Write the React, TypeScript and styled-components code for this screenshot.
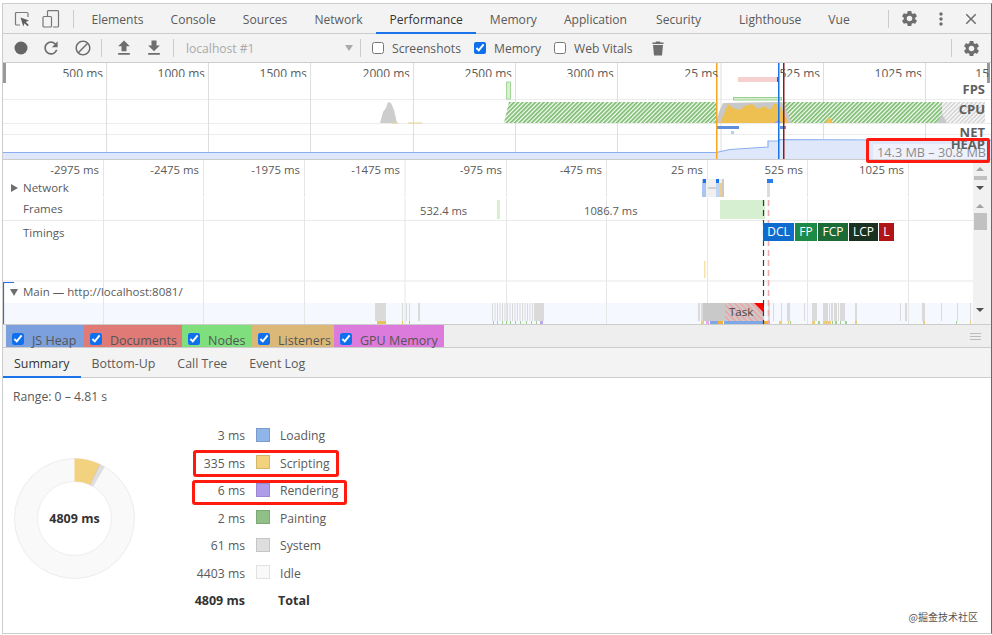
import React from 'react'
import styled, { createGlobalStyle } from 'styled-components'
import { MdSettings, MdRefresh, MdBlock, MdFileUpload, MdFileDownload, MdClose, MdMoreVert } from 'react-icons/md'

const Global = createGlobalStyle`
  html, body { margin: 0; padding: 0; background: #fff; overflow: hidden; }
  body { font-family: "Open Sans", "Noto Sans", "Liberation Sans", sans-serif; font-size: 12px; color: #5a5a5a; }
  * { box-sizing: border-box; }
`

const Frame = styled.div`
  width: 990px;
  height: 631px;
  margin: 3px 0 0 2px;
  border-top: 1px solid #ccc;
  border-left: 1px solid #ccc;
  border-right: 1px solid #667;
  border-bottom: 1px solid #ccc;
  display: flex;
  flex-direction: column;
  position: relative;
`

const Bar = styled.div<{ $h: number; $l?: number; $r?: number }>`
  height: ${p => p.$h}px;
  flex: none;
  display: flex;
  align-items: center;
  padding: 0 ${p => p.$r ?? 0}px 0 ${p => p.$l ?? 0}px;
  background: #f3f3f3;
  border-bottom: 1px solid #ccc;
  color: #5a5a5a;
`

const IconBtn = styled.span<{ $w?: number; $ml?: number }>`
  width: ${p => p.$w ?? 30}px;
  margin-left: ${p => p.$ml ?? 0}px;
  flex: none;
  display: flex;
  align-items: center;
  justify-content: center;
  color: #6e6e6e;
`

const Sep = styled.span<{ $l: number; $r: number }>`
  width: 1px;
  height: 18px;
  flex: none;
  background: #ccc;
  margin: 0 ${p => p.$r}px 0 ${p => p.$l}px;
`

const PanelTab = styled.span<{ $on?: boolean; $gap?: number }>`
  align-self: flex-start;
  height: 30px;
  padding: 0 13.5px;
  margin-left: ${p => p.$gap ?? 0}px;
  display: flex;
  align-items: center;
  font-size: 12.1px;
  color: ${p => (p.$on ? '#333' : '#5a5a5a')};
  border-bottom: 2px solid ${p => (p.$on ? '#1a73e8' : 'transparent')};
  border-top: 3px solid transparent;
`

const Spacer = styled.span`
  flex: 1;
`

const Select = styled.span`
  width: 167px;
  margin-left: 12px;
  display: flex;
  align-items: center;
  justify-content: space-between;
  color: #aaa;
  font-size: 12.1px;
`

const Caret = styled.span<{ $dir: 'up' | 'down' | 'right'; $color?: string; $size?: number; $len?: number }>`
  display: block;
  width: 0;
  height: 0;
  flex: none;
  border-style: solid;
  border-color: transparent;
  ${p => {
    const s = p.$size ?? 4.5
    const l = p.$len ?? s
    const c = p.$color ?? '#999'
    if (p.$dir === 'up') return `border-width: 0 ${s}px ${l}px; border-bottom-color: ${c};`
    if (p.$dir === 'down') return `border-width: ${l}px ${s}px 0; border-top-color: ${c};`
    return `border-width: ${s}px 0 ${s}px ${l}px; border-left-color: ${c};`
  }}
`

const CheckLabel = styled.label<{ $w: number }>`
  width: ${p => p.$w}px;
  flex: none;
  display: flex;
  align-items: center;
  gap: 8px;
  font-size: 12.1px;
  color: #5a5a5a;
`

const Check = styled.input.attrs({ type: 'checkbox' })`
  width: 12px;
  height: 12px;
  margin: 0;
  flex: none;
  accent-color: #0f6fec;
`

/* overview strip */
const Overview = styled.div`
  height: 97px;
  flex: none;
  position: relative;
  overflow: hidden;
  border-bottom: 1px solid #ccc;
  background: #fff;
`

const Drawing = styled.svg`
  position: absolute;
  left: 0;
  top: 0;
  display: block;
`

const OverviewTime = styled.span<{ $end: number }>`
  position: absolute;
  top: 3px;
  left: ${p => p.$end - 3}px;
  height: 11px;
  overflow: hidden;
  transform: translateX(-100%);
  line-height: 16px;
  font-size: 12px;
  white-space: nowrap;
`

const TrackName = styled.span<{ $top: number }>`
  position: absolute;
  right: 6px;
  top: ${p => p.$top}px;
  line-height: 16px;
  font-size: 13px;
  font-weight: 700;
  color: #5f5f5f;
`

const HeapRange = styled.span`
  position: absolute;
  right: 5px;
  top: 81px;
  padding: 0 0 0 4px;
  line-height: 16px;
  font-size: 12.7px;
  color: #8c8c8c;
  background: rgba(244, 246, 252, 0.75);
  white-space: nowrap;
`

const RedBox = styled.span`
  position: absolute;
  left: 866px;
  top: 138px;
  width: 124px;
  height: 25px;
  border: 3px solid #ff1a10;
  border-radius: 2px;
  z-index: 3;
`

/* flame chart */
const Flame = styled.div`
  height: 164px;
  flex: none;
  display: flex;
`

const FlameArea = styled.div`
  flex: 1;
  position: relative;
  overflow: hidden;
  background: #fff;
`

const FlameRow = styled.div<{ $h: number; $pad?: number }>`
  height: ${p => p.$h}px;
  padding-top: ${p => p.$pad ?? 0}px;
  padding-left: 20px;
  position: relative;
  display: flex;
  align-items: flex-start;
  font-size: 11.5px;
  line-height: 16px;
`

const RowCaret = styled.span<{ $x: number; $y: number }>`
  position: absolute;
  left: ${p => p.$x}px;
  top: ${p => p.$y}px;
  display: flex;
`

const FlameTime = styled.span<{ $end: number }>`
  position: absolute;
  top: 2px;
  left: ${p => p.$end - 3}px;
  transform: translateX(-100%);
  line-height: 16px;
  font-size: 11.4px;
  white-space: nowrap;
`

const FrameTime = styled.span<{ $x: number }>`
  position: absolute;
  top: 5px;
  left: ${p => p.$x - 3}px;
  line-height: 16px;
  font-size: 11.2px;
  white-space: nowrap;
`

const Marks = styled.div`
  position: absolute;
  left: 760px;
  top: 2px;
  display: flex;
  gap: 1px;
`

const Mark = styled.span<{ $w: number; $bg: string }>`
  width: ${p => p.$w}px;
  height: 18px;
  background: ${p => p.$bg};
  color: #fff;
  font-size: 12px;
  line-height: 18px;
  text-align: center;
`

const TaskLabel = styled.span`
  position: absolute;
  left: 726px;
  top: 1px;
  font-size: 11.5px;
  line-height: 16px;
  color: #444;
`

const Scroll = styled.div`
  width: 18px;
  flex: none;
  background: #f1f1f1;
  display: flex;
  flex-direction: column;
  align-items: center;
  padding: 7px 4px 0 0;
`

const ScrollThumb = styled.span<{ $h: number; $top: number; $bottom: number }>`
  width: 13px;
  height: ${p => p.$h}px;
  margin: ${p => p.$top}px 0 ${p => p.$bottom}px;
  background: #c1c1c1;
`

const ScrollGap = styled.span`
  height: 14px;
  flex: none;
`

/* memory counters */
const MemoryBar = styled.div`
  height: 24px;
  flex: none;
  display: flex;
  padding-left: 3px;
  background: #eee;
  border-top: 1px solid #ccc;
  border-bottom: 1px solid #ccc;
  align-items: stretch;
`

const MemoryTab = styled.label<{ $bg: string; $w: number }>`
  width: ${p => p.$w}px;
  display: flex;
  align-items: flex-end;
  gap: 8px;
  padding-left: 6px;
  background: ${p => p.$bg};
  font-size: 12.5px;
  line-height: 13px;
  color: #555;
  white-space: nowrap;
  ${Check} { margin-bottom: 2px; }
`

const Hamburger = styled.span`
  width: 11px;
  height: 7px;
  margin: auto 10px auto auto;
  border-top: 1px solid #bbb;
  border-bottom: 1px solid #bbb;
  position: relative;
  &::after {
    content: '';
    position: absolute;
    left: 0;
    right: 0;
    top: 2px;
    height: 1px;
    background: #bbb;
  }
`

const SummaryTab = styled.span<{ $on?: boolean }>`
  align-self: flex-start;
  height: 30px;
  padding: 0 11px;
  display: flex;
  align-items: center;
  font-size: 12.4px;
  color: ${p => (p.$on ? '#333' : '#5a5a5a')};
  border-bottom: 2px solid ${p => (p.$on ? '#1a73e8' : 'transparent')};
  border-top: 3px solid transparent;
`

/* summary panel */
const Panel = styled.div`
  flex: 1;
  padding: 11px 0 0 10px;
  background: #fff;
`

const RangeLine = styled.div`
  font-size: 12.2px;
  line-height: 16px;
`

const Split = styled.div`
  display: flex;
  align-items: flex-start;
`

const Pie = styled.div`
  width: 121px;
  height: 121px;
  margin: 53px 0 0 1px;
  flex: none;
  position: relative;
  display: flex;
  align-items: center;
  justify-content: center;
  font-weight: 700;
  font-size: 12.5px;
  color: #333;
  svg { position: absolute; inset: 0; }
  span { position: relative; }
`

const Legend = styled.div`
  margin: 17px 0 0 29px;
`

const LegendRow = styled.div<{ $bold?: boolean }>`
  height: 27.5px;
  display: flex;
  align-items: center;
  font-size: ${p => (p.$bold ? 12.5 : 12.2)}px;
  font-weight: ${p => (p.$bold ? 700 : 400)};
  color: ${p => (p.$bold ? '#333' : '#5a5a5a')};
`

const Value = styled.span`
  width: 81px;
  text-align: right;
  white-space: nowrap;
`

const Swatch = styled.span<{ $bg: string; $bd: string }>`
  width: 14px;
  height: 14px;
  margin: -2px 10px 0 11px;
  flex: none;
  background: ${p => p.$bg};
  border: 1px solid ${p => p.$bd};
`

const TotalLabel = styled.span`
  margin-left: 33px;
`

const Highlight = styled.span<{ $x: number; $y: number; $w: number; $h: number }>`
  position: absolute;
  left: ${p => p.$x}px;
  top: ${p => p.$y}px;
  width: ${p => p.$w}px;
  height: ${p => p.$h}px;
  border: 3px solid #ff1a10;
  border-radius: 3px;
`

const Watermark = styled.span`
  position: absolute;
  right: 13px;
  bottom: 9px;
  font-family: "Noto Sans CJK SC", sans-serif;
  font-size: 10px;
  line-height: 14px;
  color: #555;
`

const overviewGrid = [106.5, 208.5, 310.5, 413.5, 515.5, 617.5, 721, 823.5, 925.5]
const overviewTimes: [string, number][] = [
  ['500 ms', 103], ['1000 ms', 205], ['1500 ms', 307], ['2000 ms', 410], ['2500 ms', 512],
  ['3000 ms', 614], ['25 ms', 718], ['525 ms', 820], ['1025 ms', 922], ['15', 989],
]
const flameGrid = [103.5, 203.5, 304.5, 405, 506.5, 606.5, 707.5, 807.5, 908.5]
const flameTimes: [string, number][] = [
  ['-2975 ms', 99], ['-2475 ms', 199], ['-1975 ms', 300], ['-1475 ms', 400], ['-975 ms', 502],
  ['-475 ms', 602], ['25 ms', 703], ['525 ms', 803], ['1025 ms', 904], ['15', 990],
]
const denseStripes: [number, number][] = Array.from({ length: 17 }, (_, i) => [492 + i * 2.5, 1])
const stripes: [number, number][] = [
  [375, 11], [402, 1], [406, 1], [409, 1], [418, 2], ...denseStripes, [534, 10], [698, 2], [701, 2],
  [768, 2], [773, 1], [781, 1], [787, 3], [804, 1], [812, 5], [823, 5], [829, 1], [831, 2], [834, 3],
  [838, 1], [840, 5], [855, 2], [900, 1], [905, 2], [922, 3], [941, 1], [957, 1], [970, 1],
]
const ticks: [number, number, string][] = [
  [377, 9, '#eac05a'], [402, 1, '#eac05a'], [409, 1, '#9fd08f'], [493, 1, '#9fd08f'], [497, 1, '#eac05a'],
  [502, 1, '#9fd08f'], [506, 1, '#9fd08f'], [510, 1, '#9fd08f'], [515, 1, '#9fd08f'],
  [520, 1, '#9fd08f'], [526, 1, '#9fd08f'], [531, 1, '#9fd08f'], [536, 1, '#9fd08f'], [540, 3, '#b9a6ea'],
  [701, 3, '#f0cc78'], [706, 3, '#e9a8ea'], [710, 8, '#7da7e8'], [718, 5, '#f0b040'], [724, 39, '#7da7e8'],
  [763, 7, '#f0b040'], [779, 3, '#f0cc78'], [788, 1, '#f0cc78'], [790, 1, '#9fd08f'], [812, 3, '#f0cc78'],
  [818, 2, '#9fd08f'], [823, 8, '#f0cc78'], [832, 1, '#9fd08f'], [835, 2, '#9fd08f'], [840, 1, '#9fd08f'],
  [845, 2, '#9fd08f'], [855, 2, '#f0cc78'], [923, 2, '#f0cc78'], [956, 1, '#9fd08f'], [970, 1, '#f0cc78'],
]

const arc = (a0: number, a1: number, R: number, r: number, c = 60.5) => {
  const pt = (a: number, d: number) => {
    const t = ((a - 90) * Math.PI) / 180
    return `${(c + d * Math.cos(t)).toFixed(2)} ${(c + d * Math.sin(t)).toFixed(2)}`
  }
  const big = a1 - a0 > 180 ? 1 : 0
  return `M${pt(a0, R)}A${R} ${R} 0 ${big} 1 ${pt(a1, R)}L${pt(a1, r)}A${r} ${r} 0 ${big} 0 ${pt(a0, r)}Z`
}

const legend = [
  { v: '3 ms', n: 'Loading', bg: '#8fb5e9', bd: '#7a9ccb' },
  { v: '335 ms', n: 'Scripting', bg: '#f3d27f', bd: '#d6b76a' },
  { v: '6 ms', n: 'Rendering', bg: '#ae9bea', bd: '#9a89cf' },
  { v: '2 ms', n: 'Painting', bg: '#90c088', bd: '#7ca876' },
  { v: '61 ms', n: 'System', bg: '#dedede', bd: '#c6c6c6' },
  { v: '4403 ms', n: 'Idle', bg: '#f9f9f9', bd: '#e2e2e2' },
]

const InspectIcon = () => (
  <svg width="16" height="16" viewBox="0 0 16 16">
    <path d="M6 14H2.5A1 1 0 0 1 1.5 13V2.5A1 1 0 0 1 2.5 1.5H13A1 1 0 0 1 14 2.5V6" fill="none" stroke="#7a7a7a" strokeWidth="1.2" />
    <path d="M6.5 6.5L15 9.5L11.8 11L14.8 14L13.5 15.3L10.5 12.3L9.3 15.5Z" fill="#5f5f5f" />
  </svg>
)

const DeviceIcon = () => (
  <svg width="18" height="18" viewBox="0 0 18 18">
    <path d="M5.5 6V1.5A1 1 0 0 1 6.5 0.7H15.5A1 1 0 0 1 16.5 1.5V16A1 1 0 0 1 15.5 17H11" fill="none" stroke="#777" strokeWidth="1.2" />
    <rect x="1" y="6.5" width="8.5" height="10.5" rx="1" fill="none" stroke="#777" strokeWidth="1.2" />
  </svg>
)

const TrashIcon = () => (
  <svg width="12" height="15" viewBox="0 0 12 15">
    <path d="M4 0.5H8L8.5 1.5H11.5V3H0.5V1.5H3.5Z M1 4H11L10 14.5H2Z" fill="#6e6e6e" />
  </svg>
)

const RecordIcon = () => (
  <svg width="14" height="14">
    <circle cx="7" cy="7" r="6.5" fill="#666" />
  </svg>
)

const OverviewDrawing = () => (
  <Drawing width="988" height="97" viewBox="3 63 988 97">
    <defs>
      <pattern id="greenHatch" width="3" height="3" patternUnits="userSpaceOnUse" patternTransform="rotate(45)">
        <rect width="3" height="3" fill="#fff" />
        <rect width="1.8" height="3" fill="#7dbd70" />
      </pattern>
      <pattern id="greyHatch" width="3" height="3" patternUnits="userSpaceOnUse" patternTransform="rotate(45)">
        <rect width="3" height="3" fill="#fff" />
        <rect width="1.6" height="3" fill="#d0d0d0" />
      </pattern>
    </defs>
    {[99.5, 123.5, 134.5].map(y => (
      <line key={y} x1="3" x2="991" y1={y} y2={y} stroke="#ececec" />
    ))}
    {overviewGrid.map(x => (
      <line key={x} x1={x} x2={x} y1="63" y2="159" stroke="#dedede" />
    ))}
    <path d="M380 123L383 112L386 108L388 102L391 103L394 110L397 123Z" fill="#cdcdcd" />
    <path d="M392 123h6M408 123h14" stroke="#e8cf8a" />
    <rect x="506.5" y="82" width="4" height="17" fill="#d5efd0" stroke="#a4d79a" />
    <path d="M504 123L509 102H716V123Z" fill="url(#greenHatch)" />
    <path d="M783 102H942V123H783Z" fill="url(#greenHatch)" />
    <path d="M942 102H985V123H942Z" fill="url(#greyHatch)" />
    <path d="M937 123L942 114L947 123Z" fill="#c8c8c8" />
    <path d="M716 123L719 112L723 103L782 102L787 112L792 123Z" fill="#c8c8c8" />
    <path d="M720 123L725 112L728 104L733 108L739 110L745 106L752 104L758 109L764 106L770 110L775 103L780 106L784 114L789 123Z" fill="#eec052" />
    <path d="M825 123L829 117L833 123Z" fill="#eec052" />
    <path d="M774 123L778 120L782 123Z" fill="#ae9bea" />
    <rect x="733.5" y="97.5" width="48" height="2.5" fill="#d5efd0" stroke="#9ad08f" strokeWidth="1" />
    <rect x="738" y="77" width="39" height="5" fill="#f6cfcf" />
    <rect x="777" y="77" width="2" height="5" fill="#e22" />
    <rect x="716" y="126" width="23" height="3" fill="#5f8fdc" />
    <rect x="780" y="126" width="6" height="3" fill="#5f8fdc" />
    <rect x="731" y="131" width="3" height="3" fill="#b7cdf3" />
    <path d="M3 152.5H716L730 149.5L768 147V141H779V139.5L991 140.5V159H3Z" fill="#dfe8fb" />
    <path d="M3 152.5H716L730 149.5L768 147V141H779V139.5L991 140.5" fill="none" stroke="#8ab0ef" strokeWidth="1.2" />
    <rect x="716" y="63" width="1.5" height="96" fill="#f5a623" />
    <rect x="778" y="63" width="1.5" height="96" fill="#1a73e8" />
    <rect x="783" y="63" width="1.5" height="96" fill="#8b1a1a" />
    <rect x="3" y="63" width="3" height="20" fill="#999" />
    <rect x="987" y="63" width="3" height="20" fill="#999" />
  </Drawing>
)

const FlameDrawing = () => (
  <Drawing width="970" height="164" viewBox="3 160 970 164">
    <defs>
      <pattern id="taskHatch" width="4" height="4" patternUnits="userSpaceOnUse" patternTransform="rotate(-45)">
        <rect width="4" height="4" fill="#ccc" />
        <rect width="2" height="4" fill="#e8a9a9" />
      </pattern>
    </defs>
    <rect x="3" y="303" width="970" height="21" fill="#f5f9ff" />
    <rect x="3" y="280" width="970" height="2" fill="#f3f3f3" />
    <line x1="3" x2="973" y1="220.5" y2="220.5" stroke="#eaeaea" />
    {flameGrid.map(x => (
      <g key={x}>
        <line x1={x} x2={x} y1="160" y2="197" stroke="#e6e6e6" />
        <line x1={x} x2={x} y1="198" y2="324" stroke="#e6e6e6" />
      </g>
    ))}
    <rect x="702" y="179" width="22" height="18" fill="#f0f0f0" />
    <rect x="702" y="179" width="4" height="18" fill="#a9c6f2" />
    <rect x="703" y="179" width="3" height="4" fill="#1a73e8" />
    <rect x="716" y="179" width="3" height="4" fill="#1a73e8" />
    <rect x="716" y="183" width="4" height="14" fill="#c0d4f3" />
    <rect x="720" y="183" width="2" height="14" fill="#f0cc88" />
    <rect x="722" y="179" width="2" height="18" fill="#c9c9c9" />
    <rect x="708" y="187" width="8" height="2" fill="#cfcfcf" />
    <rect x="767" y="179" width="3" height="18" fill="#dcdcdc" />
    <rect x="767" y="179" width="6" height="4" fill="#2b7de9" />
    <rect x="720" y="200" width="45" height="19" fill="#d5efd0" />
    <rect x="497" y="200" width="3" height="19" fill="#d5efd0" />
    <rect x="704" y="261" width="1.5" height="17" fill="#f5e3a8" />
    {stripes.map(([x, w]) => (
      <rect key={`${x}-${w}`} x={x} y="303" width={w} height="18" fill="#dadada" />
    ))}
    <rect x="703" y="303" width="22" height="18" fill="#c9c9c9" />
    <rect x="725" y="303" width="39" height="18" fill="url(#taskHatch)" />
    <path d="M754 303H764V313Z" fill="#f00" />
    {ticks.map(([x, w, c]) => (
      <rect key={`${x}-${w}`} x={x} y="321" width={w} height="3" fill={c} />
    ))}
    <line x1="763.5" x2="763.5" y1="200" y2="324" stroke="#1e4a38" strokeWidth="1.2" strokeDasharray="6 4" />
    <line x1="768.5" x2="768.5" y1="200" y2="324" stroke="#efabab" strokeWidth="1.6" strokeDasharray="6 4" />
    <path d="M3.5 324V282.5H14" fill="none" stroke="#2b6fd8" strokeWidth="1.2" />
  </Drawing>
)

export default function App() {
  return (
    <>
      <Global />
      <Frame>
        <Bar $h={30} $l={3} $r={5}>
          <IconBtn $w={32}><InspectIcon /></IconBtn>
          <IconBtn $w={26}><DeviceIcon /></IconBtn>
          <Sep $l={9} $r={4} />
          {['Elements', 'Console', 'Sources', 'Network'].map(t => <PanelTab key={t}>{t}</PanelTab>)}
          <PanelTab $on>Performance</PanelTab>
          <PanelTab>Memory</PanelTab>
          <PanelTab>Application</PanelTab>
          <PanelTab $gap={2}>Security</PanelTab>
          <PanelTab $gap={11}>Lighthouse</PanelTab>
          <PanelTab>Vue</PanelTab>
          <Spacer />
          <Sep $l={0} $r={3} />
          <IconBtn $w={34}><MdSettings size={19} /></IconBtn>
          <IconBtn $w={30}><MdMoreVert size={20} /></IconBtn>
          <IconBtn $w={30}><MdClose size={18} /></IconBtn>
        </Bar>
        <Bar $h={29} $l={3} $r={6}>
          <IconBtn $w={30}><RecordIcon /></IconBtn>
          <IconBtn $w={30}><MdRefresh size={20} /></IconBtn>
          <IconBtn $w={32} $ml={1}><MdBlock size={18} /></IconBtn>
          <Sep $l={2} $r={7} />
          <IconBtn $w={30}><MdFileUpload size={20} /></IconBtn>
          <IconBtn $w={30}><MdFileDownload size={20} /></IconBtn>
          <Sep $l={4} $r={0} />
          <Select>localhost #1<Caret $dir="down" $color="#aaa" $len={6} /></Select>
          <Sep $l={7} $r={11} />
          <CheckLabel $w={102}><Check readOnly />Screenshots</CheckLabel>
          <CheckLabel $w={80}><Check readOnly checked />Memory</CheckLabel>
          <CheckLabel $w={98}><Check readOnly />Web Vitals</CheckLabel>
          <IconBtn $w={12}><TrashIcon /></IconBtn>
          <Spacer />
          <Sep $l={0} $r={5} />
          <IconBtn $w={28}><MdSettings size={19} /></IconBtn>
        </Bar>
        <Overview>
          <OverviewDrawing />
          {overviewTimes.map(([t, x]) => <OverviewTime key={t} $end={x}>{t}</OverviewTime>)}
          <TrackName $top={18}>FPS</TrackName>
          <TrackName $top={38}>CPU</TrackName>
          <TrackName $top={61}>NET</TrackName>
          <HeapRange>14.3 MB – 30.8 MB</HeapRange>
          <TrackName $top={73}>HEAP</TrackName>
        </Overview>
        <Flame>
          <FlameArea>
            <FlameDrawing />
            <FlameRow $h={17}>
              {flameTimes.map(([t, x]) => <FlameTime key={t} $end={x}>{t}</FlameTime>)}
            </FlameRow>
            <FlameRow $h={21} $pad={3}>
              <RowCaret $x={8} $y={7}><Caret $dir="right" $color="#6e6e6e" $size={4} $len={7} /></RowCaret>
              Network
            </FlameRow>
            <FlameRow $h={23} $pad={3}>
              Frames
              <FrameTime $x={420}>532.4 ms</FrameTime>
              <FrameTime $x={584}>1086.7 ms</FrameTime>
            </FlameRow>
            <FlameRow $h={59} $pad={4}>
              Timings
              <Marks>
                <Mark $w={31} $bg="#0f6ccf">DCL</Mark>
                <Mark $w={22} $bg="#1e8a47">FP</Mark>
                <Mark $w={30} $bg="#1c6a36">FCP</Mark>
                <Mark $w={29} $bg="#1a3020">LCP</Mark>
                <Mark $w={15} $bg="#b01414">L</Mark>
              </Marks>
            </FlameRow>
            <FlameRow $h={23} $pad={4}>
              <RowCaret $x={7} $y={9}><Caret $dir="down" $color="#6e6e6e" $size={4} $len={7} /></RowCaret>
              Main — http://localhost:8081/
            </FlameRow>
            <FlameRow $h={21}>
              <TaskLabel>Task</TaskLabel>
            </FlameRow>
          </FlameArea>
          <Scroll>
            <Caret $dir="up" $color="#a3a3a3" />
            <ScrollThumb $h={4} $top={5} $bottom={6} />
            <Caret $dir="down" $color="#505050" />
            <ScrollGap />
            <Caret $dir="up" $color="#a3a3a3" />
            <ScrollThumb $h={17} $top={5} $bottom={78} />
            <Caret $dir="down" $color="#505050" />
          </Scroll>
        </Flame>
        <MemoryBar>
          <MemoryTab $bg="#7c9fdd" $w={78}><Check readOnly checked />JS Heap</MemoryTab>
          <MemoryTab $bg="#df7a76" $w={98}><Check readOnly checked />Documents</MemoryTab>
          <MemoryTab $bg="#7fdf7d" $w={70}><Check readOnly checked />Nodes</MemoryTab>
          <MemoryTab $bg="#dcb878" $w={82}><Check readOnly checked />Listeners</MemoryTab>
          <MemoryTab $bg="#dc7bdc" $w={110}><Check readOnly checked />GPU Memory</MemoryTab>
          <Hamburger />
        </MemoryBar>
        <Bar $h={30}>
          <SummaryTab $on>Summary</SummaryTab>
          <SummaryTab>Bottom-Up</SummaryTab>
          <SummaryTab>Call Tree</SummaryTab>
          <SummaryTab>Event Log</SummaryTab>
        </Bar>
        <Panel>
          <RangeLine>Range: 0 – 4.81 s</RangeLine>
          <Split>
            <Pie>
              <svg width="121" height="121" viewBox="0 0 121 121">
                <circle cx="60.5" cy="60.5" r="48.5" fill="none" stroke="#f9f9f9" strokeWidth="23" />
                <circle cx="60.5" cy="60.5" r="60" fill="none" stroke="#e9e9e9" strokeWidth="0.8" />
                <circle cx="60.5" cy="60.5" r="37" fill="#fff" stroke="#e9e9e9" strokeWidth="0.8" />
                <path d={arc(0, 25.1, 60, 37)} fill="#f3d27f" />
                <path d={arc(25.1, 25.6, 60, 37)} fill="#ae9bea" />
                <path d={arc(25.6, 30.3, 60, 37)} fill="#dedede" />
              </svg>
              <span>4809 ms</span>
            </Pie>
            <Legend>
              {legend.map(l => (
                <LegendRow key={l.n}>
                  <Value>{l.v}</Value>
                  <Swatch $bg={l.bg} $bd={l.bd} />
                  {l.n}
                </LegendRow>
              ))}
              <LegendRow $bold>
                <Value>4809 ms</Value>
                <TotalLabel>Total</TotalLabel>
              </LegendRow>
            </Legend>
          </Split>
        </Panel>
        <Highlight $x={190} $y={446} $w={146} $h={27} />
        <Highlight $x={189} $y={476} $w={155} $h={25} />
        <Watermark>@掘金技术社区</Watermark>
      </Frame>
      <RedBox />
    </>
  )
}
